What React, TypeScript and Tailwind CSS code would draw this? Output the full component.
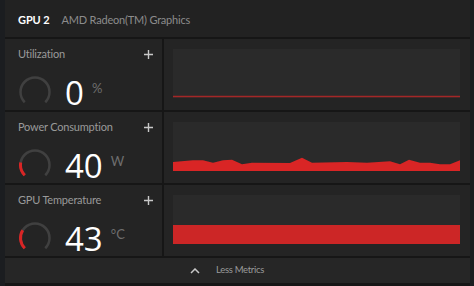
import React from "react";

const RED = "#d92525";

function polar(cx: number, cy: number, r: number, deg: number) {
    const a = (deg * Math.PI) / 180;
    return [cx + r * Math.cos(a), cy + r * Math.sin(a)];
}

function arc(cx: number, cy: number, r: number, from: number, to: number) {
    const [x1, y1] = polar(cx, cy, r, from);
    const [x2, y2] = polar(cx, cy, r, to);
    const large = to - from > 180 ? 1 : 0;
    return `M ${x1} ${y1} A ${r} ${r} 0 ${large} 1 ${x2} ${y2}`;
}

// gauge ring with a gap at the bottom, red part grows clockwise from 7 o'clock
function Gauge({ sweep }: { sweep: number }) {
    return (
        <svg width="34" height="34" viewBox="0 0 34 34" className="shrink-0">
            <path d={arc(17, 17, 14.5, 135, 405)} fill="none" stroke="#404040" strokeWidth="2.5" />
            {sweep > 0 && (
                <path d={arc(17, 17, 14.5, 135, 135 + sweep)} fill="none" stroke={RED} strokeWidth="3" />
            )}
        </svg>
    );
}

function Plus() {
    return (
        <svg width="9" height="9" viewBox="0 0 9 9">
            <path d="M4.5 0 V9 M0 4.5 H9" stroke="#c9c9c9" strokeWidth="1.4" />
        </svg>
    );
}

const powerPts: [number, number][] = [
    [0, 40], [20, 38.3], [30, 38.3], [40, 40.7], [50, 38.3], [59, 37.7], [69, 42.3],
    [79, 40.7], [117, 41], [129, 35.7], [139, 40.7], [174, 40], [194, 40.7],
    [217, 39.3], [227, 42.3], [236, 37.7], [247, 40.7], [257, 40.7], [267, 42.3],
    [277, 42.3], [287, 38.3],
];

function Chart({ kind }: { kind: "util" | "power" | "temp" }) {
    let body: React.ReactNode = null;
    if (kind === "util") {
        body = <line x1="0" y1="47.5" x2="287" y2="47.5" stroke="#a42727" strokeWidth="1.5" />;
    } else if (kind === "power") {
        const d = "M 0 49 " + powerPts.map(([x, y]) => `L ${x} ${y}`).join(" ") + " L 287 49 Z";
        body = <path d={d} fill={RED} />;
    } else {
        body = <rect x="0" y="30" width="287" height="19" fill="#cc2626" />;
    }
    return (
        <svg width="287" height="49" viewBox="0 0 287 49" className="block bg-[#2a2a2a]">
            {body}
        </svg>
    );
}

interface Metric {
    title: string;
    value: string;
    unit: string;
    sweep: number;
    kind: "util" | "power" | "temp";
}

const metrics: Metric[] = [
    { title: "Utilization", value: "0", unit: "%", sweep: 0, kind: "util" },
    { title: "Power Consumption", value: "40", unit: "W", sweep: 55, kind: "power" },
    { title: "GPU Temperature", value: "43", unit: "°C", sweep: 77, kind: "temp" },
];

function MetricRow({ m }: { m: Metric }) {
    return (
        <div className="flex h-[71px] gap-[2px]">
            {/* left: title, gauge, value */}
            <div className="w-[157px] bg-[#242424] pl-[13px] pr-[9px] pt-[8px] flex flex-col">
                <div className="flex items-center justify-between h-[14px]">
                    <span className="text-[11px] tracking-[-0.2px] text-[#9a9a9a]">{m.title}</span>
                    <Plus />
                </div>
                <div className="flex items-center mt-[14px]">
                    <Gauge sweep={m.sweep} />
                    <span
                        className="ml-[13px] text-[33px] leading-none text-white"
                        style={{ fontFamily: '"Open Sans", sans-serif' }}
                    >
                        {m.value}
                    </span>
                    <span className="ml-[8px] mb-[6px] text-[13px] text-[#6e6e6e]">{m.unit}</span>
                </div>
            </div>
            {/* right: history chart */}
            <div className="flex-1 bg-[#242424] pl-[9px] pt-[10px]">
                <Chart kind={m.kind} />
            </div>
        </div>
    );
}

export default function App() {
    return (
        <div
            className="w-[474px] h-[286px] bg-[#1b1d20] pl-[5px] overflow-hidden"
            style={{ fontFamily: 'Lato, "Noto Sans", sans-serif' }}
        >
            <div className="w-[465px] h-full bg-[#161616] flex flex-col">
                {/* header */}
                <div className="h-[37px] bg-[#222222] flex items-center pl-[13px] pt-[3px]">
                    <span className="text-[11px] tracking-[-0.1px] font-bold text-white">GPU 2</span>
                    <span className="ml-[12px] text-[11px] tracking-[-0.2px] text-[#8c8c8c]">
                        AMD Radeon(TM) Graphics
                    </span>
                </div>

                <div className="flex flex-col gap-[2px] pt-[2px]">
                    {metrics.map((m) => (
                        <MetricRow key={m.title} m={m} />
                    ))}
                </div>

                {/* footer */}
                <div className="mt-[2px] h-[25px] bg-[#262626] flex items-center pl-[185px]">
                    <svg width="10" height="6" viewBox="0 0 10 6">
                        <path d="M1 5 L5 1 L9 5" fill="none" stroke="#c9c9c9" strokeWidth="1.5" />
                    </svg>
                    <span className="ml-[16px] text-[9.5px] tracking-[-0.3px] text-[#9a9a9a]">Less Metrics</span>
                </div>
            </div>
        </div>
    );
}
